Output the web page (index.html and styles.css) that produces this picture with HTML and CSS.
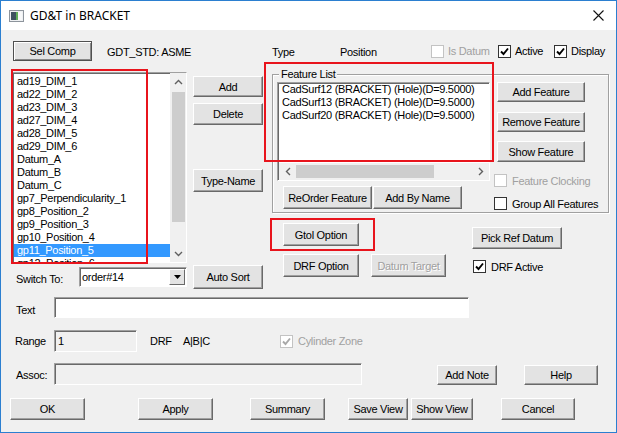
FILE: index.html
```html
<!DOCTYPE html>
<html lang="en">
<head>
  <meta charset="UTF-8">
  <title>GD&amp;T in BRACKET</title>
  <link rel="stylesheet" href="styles.css">
</head>
<body>
  <div class="window">
    <div class="titlebar">
      <svg class="app-icon" width="15" height="12" viewBox="0 0 15 12">
        <rect x="0.5" y="0.5" width="14" height="11" fill="#eef0f2" stroke="#8d949c"/>
        <rect x="2" y="2" width="5" height="8" fill="#3d5260"/>
        <rect x="7" y="2" width="2" height="8" fill="#5fae58"/>
        <rect x="9" y="2" width="4" height="8" fill="#f7f8f9"/>
      </svg>
      <span class="title">GD&amp;T in BRACKET</span>
      <svg class="close" width="11" height="11" viewBox="0 0 11 11">
        <path d="M0.5 0.5L10.5 10.5M10.5 0.5L0.5 10.5" stroke="#111" stroke-width="1.1"/>
      </svg>
    </div>

    <div class="top-row">
      <button class="btn default sel-comp">Sel Comp</button>
      <span class="gdt-std">GDT_STD: ASME</span>
      <span class="type-label">Type</span>
      <span class="type-value">Position</span>
      <label class="check-item is-datum disabled"><span class="check"></span><span>Is Datum</span></label>
      <label class="check-item active-opt"><span class="check"><svg viewBox="0 0 9 9"><path d="M1 4.5L3.5 7L8 1.5"/></svg></span><span>Active</span></label>
      <label class="check-item"><span class="check"><svg viewBox="0 0 9 9"><path d="M1 4.5L3.5 7L8 1.5"/></svg></span><span>Display</span></label>
    </div>

    <div class="main">
      <div class="col-left">
        <div class="listbox comp-list">
          <div class="items">
            <div class="item">ad19_DIM_1</div>
            <div class="item">ad22_DIM_2</div>
            <div class="item">ad23_DIM_3</div>
            <div class="item">ad27_DIM_4</div>
            <div class="item">ad28_DIM_5</div>
            <div class="item">ad29_DIM_6</div>
            <div class="item">Datum_A</div>
            <div class="item">Datum_B</div>
            <div class="item">Datum_C</div>
            <div class="item">gp7_Perpendicularity_1</div>
            <div class="item">gp8_Position_2</div>
            <div class="item">gp9_Position_3</div>
            <div class="item">gp10_Position_4</div>
            <div class="item selected">gp11_Position_5</div>
            <div class="item">gp12_Position_6</div>
          </div>
          <div class="vscroll">
            <div class="arrow"><svg width="9" height="6" viewBox="0 0 9 6"><path d="M1 5L4.5 1.5L8 5"/></svg></div>
            <div class="thumb"></div>
            <div class="arrow down"><svg width="9" height="6" viewBox="0 0 9 6"><path d="M1 1L4.5 4.5L8 1"/></svg></div>
          </div>
        </div>
        <div class="switch-row">
          <span class="switch-label">Switch To:</span>
          <div class="combo">
            <span class="combo-text">order#14</span>
            <span class="combo-btn"><svg width="7" height="4" viewBox="0 0 7 4"><path d="M0 0H7L3.5 4Z" fill="#000"/></svg></span>
          </div>
        </div>
      </div>

      <div class="col-mid">
        <button class="btn add">Add</button>
        <button class="btn delete">Delete</button>
        <button class="btn type-name">Type-Name</button>
        <button class="btn auto-sort">Auto Sort</button>
      </div>

      <div class="col-right">
        <div class="groupbox">
          <span class="legend">Feature List</span>
          <div class="gb-left">
            <div class="listbox feature-list">
              <div class="items">
                <div class="item">CadSurf12 (BRACKET) (Hole)(D=9.5000)</div>
                <div class="item">CadSurf13 (BRACKET) (Hole)(D=9.5000)</div>
                <div class="item">CadSurf20 (BRACKET) (Hole)(D=9.5000)</div>
              </div>
              <div class="hscroll">
                <div class="arrow"><svg width="6" height="9" viewBox="0 0 6 9"><path d="M5 1L1.5 4.5L5 8"/></svg></div>
                <div class="thumb"></div>
                <div class="arrow right"><svg width="6" height="9" viewBox="0 0 6 9"><path d="M1 1L4.5 4.5L1 8"/></svg></div>
              </div>
            </div>
            <div class="gb-buttons">
              <button class="btn reorder">ReOrder Feature</button>
              <button class="btn add-by-name">Add By Name</button>
            </div>
          </div>
          <div class="gb-right">
            <button class="btn feat-btn">Add Feature</button>
            <button class="btn feat-btn remove">Remove Feature</button>
            <button class="btn feat-btn show">Show Feature</button>
            <label class="check-item clocking disabled"><span class="check"></span><span>Feature Clocking</span></label>
            <label class="check-item group-all"><span class="check"></span><span>Group All Features</span></label>
          </div>
        </div>

        <div class="opt-row">
          <button class="btn gtol">Gtol Option</button>
          <button class="btn pick-ref">Pick Ref Datum</button>
        </div>
        <div class="opt-row second">
          <button class="btn drf-opt">DRF Option</button>
          <button class="btn datum-target" disabled>Datum Target</button>
          <label class="check-item drf-active"><span class="check"><svg viewBox="0 0 9 9"><path d="M1 4.5L3.5 7L8 1.5"/></svg></span><span>DRF Active</span></label>
        </div>
      </div>
    </div>

    <div class="form-row text-row">
      <span class="field-label">Text</span>
      <div class="field text-field"></div>
    </div>
    <div class="form-row range-row">
      <span class="field-label">Range</span>
      <div class="field off range-field">1</div>
      <span class="drf-label">DRF</span>
      <span class="drf-value">A|B|C</span>
      <label class="check-item disabled cyl"><span class="check"><svg viewBox="0 0 9 9"><path d="M1 4.5L3.5 7L8 1.5"/></svg></span><span>Cylinder Zone</span></label>
    </div>
    <div class="form-row assoc-row">
      <span class="field-label">Assoc:</span>
      <div class="field off assoc-field"></div>
      <button class="btn add-note">Add Note</button>
      <button class="btn help">Help</button>
    </div>

    <div class="button-row">
      <button class="btn ok">OK</button>
      <button class="btn apply">Apply</button>
      <button class="btn summary">Summary</button>
      <button class="btn save-view">Save View</button>
      <button class="btn show-view">Show View</button>
      <button class="btn cancel">Cancel</button>
    </div>

    <!-- red highlight boxes -->
    <div class="mark mark-list"></div>
    <div class="mark mark-features"></div>
    <div class="mark mark-gtol"></div>
  </div>
</body>
</html>
```

FILE: styles.css
```css
* {
  box-sizing: border-box;
}
body {
  margin: 0;
  font-family: 'Liberation Sans', Arial, sans-serif;
  font-size: 11px;
  letter-spacing: -0.3px;
  color: #000;
  background: #fff;
}
.window {
  position: relative;
  width: 617px;
  height: 433px;
  border: 1px solid #2b7fd0;
  background: #f0f0f0;
  overflow: hidden;
}
.titlebar {
  height: 29px;
  background: #fff;
  display: flex;
  align-items: center;
}
.app-icon {
  margin-left: 8px;
  margin-top: 1px;
}
.title {
  margin-left: 6px;
  font-family: 'Noto Sans', 'Open Sans', sans-serif;
  font-size: 12px;
  letter-spacing: 0;
  flex: 1;
}
.close {
  margin-right: 12px;
}

/* generic controls */
.btn {
  display: flex;
  align-items: center;
  justify-content: center;
  padding: 0;
  font: inherit;
  letter-spacing: inherit;
  color: #000;
  background: #e3e3e3;
  border: 1px solid;
  border-color: #fff #696969 #696969 #fff;
  box-shadow: inset -1px -1px #a0a0a0;
  white-space: nowrap;
}
.btn.default {
  border-color: #505050;
  box-shadow: inset 1px 1px #fff, inset -1px -1px #8a8a8a;
}
.btn:disabled {
  color: #a0a0a0;
  text-shadow: 1px 1px #fff;
}
.check-item {
  display: flex;
  align-items: center;
  white-space: nowrap;
}
.check {
  width: 13px;
  height: 13px;
  flex: none;
  border: 1px solid #333;
  background: #fff;
  display: flex;
  align-items: center;
  justify-content: center;
  margin-right: 4px;
}
.check svg {
  width: 9px;
  height: 9px;
}
.check svg path {
  fill: none;
  stroke: #000;
  stroke-width: 1.9;
}
.check-item.disabled {
  color: #a0a0a0;
}
.check-item.disabled .check {
  border-color: #c3c3c3;
}
.check-item.disabled .check svg path {
  stroke: #a8a8a8;
}
.listbox {
  display: flex;
  background: #fff;
  border: 1px solid;
  border-color: #a0a0a0 #fff #fff #a0a0a0;
  box-shadow: inset 1px 1px #696969;
  overflow: hidden;
}
.item {
  height: 13px;
  line-height: 13px;
  padding-left: 3px;
  white-space: nowrap;
}
.item.selected {
  background: #3399ff;
  color: #fff;
}
.arrow path {
  fill: none;
  stroke: #606060;
  stroke-width: 1.4;
}
.thumb {
  background: #cdcdcd;
}

/* top row */
.top-row {
  display: flex;
  align-items: center;
  height: 20px;
  margin-top: 11px;
  padding-left: 12px;
}
.sel-comp {
  width: 79px;
  height: 20px;
}
.gdt-std {
  margin-left: 15px;
  width: 165px;
  padding-top: 2px;
}
.type-label {
  width: 68px;
  padding-top: 1px;
}
.type-value {
  width: 91px;
  padding-top: 1px;
}
.is-datum {
  width: 67px;
}
.active-opt {
  width: 56px;
}

/* main area */
.main {
  display: flex;
  align-items: flex-start;
}
.col-left {
  margin-left: 11px;
  width: 175px;
}
.comp-list {
  margin-top: 11px;
  height: 191px;
}
.comp-list .items {
  width: 157px;
  padding-top: 2px;
  margin-left: 1px;
}
.vscroll {
  width: 16px;
  display: flex;
  flex-direction: column;
  align-items: center;
  background: #f0f0f0;
}
.vscroll .arrow {
  height: 17px;
  width: 16px;
  display: flex;
  align-items: center;
  justify-content: center;
}
.vscroll .thumb {
  width: 13px;
  height: 130px;
  margin-top: 2px;
}
.vscroll .arrow.down {
  margin-top: auto;
}
.switch-row {
  display: flex;
  align-items: center;
  margin-top: 4px;
  height: 20px;
}
.switch-label {
  margin-left: 4px;
  width: 63px;
  padding-top: 3px;
}
.combo {
  width: 108px;
  height: 20px;
  display: flex;
  align-items: center;
  background: #fff;
  border: 1px solid;
  border-color: #a0a0a0 #fff #fff #a0a0a0;
  box-shadow: inset 1px 1px #696969;
}
.combo-text {
  flex: 1;
  padding-left: 2px;
}
.combo-btn {
  width: 16px;
  height: 16px;
  margin-right: 1px;
  display: flex;
  align-items: center;
  justify-content: center;
  background: #e3e3e3;
  border: 1px solid;
  border-color: #fff #696969 #696969 #fff;
}
.col-mid {
  margin-left: 6px;
  width: 70px;
  display: flex;
  flex-direction: column;
}
.col-mid .btn {
  width: 70px;
}
.add {
  margin-top: 15px;
  height: 21px;
}
.delete {
  margin-top: 6px;
  height: 22px;
}
.type-name {
  margin-top: 44px;
  height: 23px;
}
.auto-sort {
  margin-top: 73px;
  height: 24px;
}
.col-right {
  flex: 1;
}
.groupbox {
  position: relative;
  display: flex;
  margin-left: 9px;
  margin-top: 13px;
  width: 337px;
  height: 139px;
  border: 1px solid #a0a0a0;
  box-shadow: inset 1px 1px #fff, 1px 1px #fff;
}
.legend {
  position: absolute;
  top: -7px;
  left: 6px;
  padding: 0 2px;
  background: #f0f0f0;
  line-height: 13px;
}
.gb-left {
  margin-left: 4px;
  margin-top: 7px;
}
.feature-list {
  width: 213px;
  height: 99px;
  flex-direction: column;
}
.feature-list .items {
  height: 80px;
  padding-left: 1px;
}
.hscroll {
  height: 17px;
  display: flex;
  align-items: center;
  background: #f0f0f0;
  margin-left: 1px;
}
.hscroll .arrow {
  width: 17px;
  height: 17px;
  display: flex;
  align-items: center;
  justify-content: center;
}
.hscroll .thumb {
  width: 138px;
  height: 13px;
}
.hscroll .arrow.right {
  margin-left: auto;
}
.gb-buttons {
  display: flex;
  margin-top: 5px;
  padding-left: 6px;
}
.gb-buttons .btn {
  width: 89px;
  height: 23px;
}
.add-by-name {
  margin-left: 1px;
}
.gb-right {
  margin-left: 4px;
  margin-top: 7px;
  display: flex;
  flex-direction: column;
}
.feat-btn {
  margin-left: 3px;
  width: 88px;
  height: 20px;
}
.feat-btn.remove {
  margin-top: 10px;
}
.feat-btn.show {
  margin-top: 9px;
  height: 21px;
}
.clocking {
  margin-top: 12px;
}
.group-all {
  margin-top: 10px;
}
.clocking .check,
.group-all .check {
  margin-right: 5px;
}
.opt-row {
  display: flex;
  align-items: flex-start;
  margin-top: 10px;
  padding-left: 20px;
}
.opt-row.second {
  margin-top: 5px;
}
.gtol,
.drf-opt {
  width: 76px;
  height: 23px;
}
.pick-ref {
  margin-left: 113px;
  margin-top: 4px;
  width: 90px;
  height: 22px;
}
.datum-target {
  margin-left: 12px;
  width: 75px;
  height: 23px;
}
.drf-active {
  margin-left: 27px;
  margin-top: 6px;
}
.drf-active .check {
  margin-right: 5px;
}

/* lower form */
.form-row {
  display: flex;
  align-items: center;
}
.field-label {
  margin-left: 15px;
  width: 38px;
  padding-top: 1px;
}
.field {
  background: #fff;
  border: 1px solid;
  border-color: #a0a0a0 #fff #fff #a0a0a0;
  box-shadow: inset 1px 1px #696969;
  padding-left: 3px;
  display: flex;
  align-items: center;
}
.field.off {
  background: #f0f0f0;
}
.text-row {
  margin-top: 8px;
  height: 21px;
}
.text-row .field-label {
  padding-top: 5px;
}
.text-field {
  width: 415px;
  height: 21px;
}
.range-row {
  margin-top: 12px;
  height: 22px;
}
.range-row .field-label {
  margin-left: 14px;
  width: 39px;
  padding-top: 0;
}
.range-field {
  width: 83px;
  height: 22px;
}
.drf-label {
  margin-left: 13px;
  width: 33px;
}
.drf-value {
  width: 97px;
}
.cyl .check {
  margin-right: 5px;
}
.assoc-row {
  margin-top: 11px;
  height: 22px;
  align-items: flex-start;
}
.assoc-row .field-label {
  line-height: 22px;
}
.assoc-field {
  width: 308px;
  height: 22px;
}
.add-note {
  margin-left: 75px;
  margin-top: 2px;
  width: 60px;
  height: 20px;
}
.help {
  margin-left: 27px;
  margin-top: 2px;
  width: 74px;
  height: 20px;
}
.button-row {
  display: flex;
  margin-top: 13px;
  padding-left: 9px;
}
.button-row .btn {
  height: 22px;
}
.ok {
  width: 75px;
}
.apply {
  margin-left: 53px;
  width: 75px;
}
.summary {
  margin-left: 37px;
  width: 75px;
}
.save-view {
  margin-left: 23px;
  width: 60px;
}
.show-view {
  margin-left: 3px;
  width: 62px;
}
.cancel {
  margin-left: 28px;
  width: 74px;
}

/* red annotation boxes */
.mark {
  position: absolute;
  border: 2px solid #e8141c;
}
.mark-list {
  left: 10px;
  top: 68px;
  width: 137px;
  height: 195px;
}
.mark-features {
  left: 263px;
  top: 61px;
  width: 230px;
  height: 100px;
}
.mark-gtol {
  left: 269px;
  top: 217px;
  width: 105px;
  height: 33px;
}
```
